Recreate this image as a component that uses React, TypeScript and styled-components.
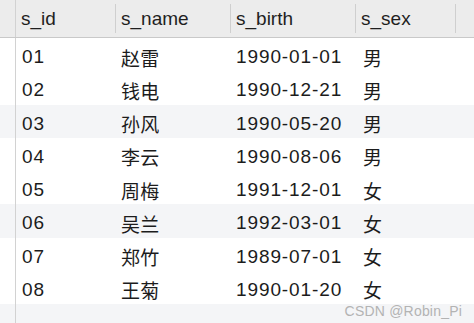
import React from 'react';
import styled, { createGlobalStyle } from 'styled-components';

const GlobalStyle = createGlobalStyle`
  html, body {
    margin: 0;
    padding: 0;
    background: #ffffff;
  }
  body {
    font-family: 'Liberation Sans', 'Noto Sans CJK SC', sans-serif;
    color: #1c1c1c;
  }
`;

const COLUMNS = '16px 99px 115px 125px 100px 1fr';

// 표 전체 영역, 워터마크 배치를 위한 relative
const Wrapper = styled.div`
  position: relative;
  width: 474px;
  height: 323px;
  overflow: hidden;
  font-size: 19px;
`;

const HeaderRow = styled.div`
  display: grid;
  grid-template-columns: ${COLUMNS};
  align-items: center;
  height: 37px;
  background-color: #ececec;
  border-bottom: 1px solid #c9c9c9;
`;

const Gutter = styled.div`
  align-self: stretch;
  border-right: 1px solid #d2d2d2;
`;

const HeaderCell = styled.div<{ $first?: boolean }>`
  display: flex;
  align-items: center;
  height: 29px;
  padding-left: 5px;
  border-left: ${(p) => (p.$first ? 'none' : '1px solid #cfcfcf')};
  color: #1f1f1f;
`;

const Row = styled.div<{ $stripe?: boolean }>`
  display: grid;
  grid-template-columns: ${COLUMNS};
  height: 33.25px;
  background-color: ${(p) => (p.$stripe ? '#f4f5f7' : '#ffffff')};
`;

const Cell = styled.div<{ $wide?: boolean; $indent?: number }>`
  display: flex;
  align-items: center;
  padding: 5px 0 0 ${(p) => p.$indent ?? 6}px;
  white-space: nowrap;
  letter-spacing: ${(p) => (p.$wide ? '0.9px' : '0.3px')};
`;

const Watermark = styled.div`
  position: absolute;
  right: 12px;
  bottom: 4px;
  font-size: 14px;
  color: #b3b3b3;
  letter-spacing: 0.2px;
`;

interface Student {
  id: string;
  name: string;
  birth: string;
  sex: string;
}

const students: Student[] = [
  { id: '01', name: '赵雷', birth: '1990-01-01', sex: '男' },
  { id: '02', name: '钱电', birth: '1990-12-21', sex: '男' },
  { id: '03', name: '孙风', birth: '1990-05-20', sex: '男' },
  { id: '04', name: '李云', birth: '1990-08-06', sex: '男' },
  { id: '05', name: '周梅', birth: '1991-12-01', sex: '女' },
  { id: '06', name: '吴兰', birth: '1992-03-01', sex: '女' },
  { id: '07', name: '郑竹', birth: '1989-07-01', sex: '女' },
  { id: '08', name: '王菊', birth: '1990-01-20', sex: '女' },
];

const headers = ['s_id', 's_name', 's_birth', 's_sex'];

const App: React.FC = () => (
  <Wrapper>
    <GlobalStyle />
    <HeaderRow>
      <Gutter />
      {headers.map((h, i) => (
        <HeaderCell key={h} $first={i === 0}>
          {h}
        </HeaderCell>
      ))}
      <HeaderCell />
    </HeaderRow>
    {students.map((s, i) => (
      <Row key={s.id} $stripe={i % 3 === 2}>
        <Gutter />
        <Cell $wide>{s.id}</Cell>
        <Cell>{s.name}</Cell>
        <Cell $wide>{s.birth}</Cell>
        <Cell $indent={8}>{s.sex}</Cell>
        <Cell />
      </Row>
    ))}
    <Row $stripe>
      <Gutter />
    </Row>
    <Watermark>CSDN @Robin_Pi</Watermark>
  </Wrapper>
);

export default App;
